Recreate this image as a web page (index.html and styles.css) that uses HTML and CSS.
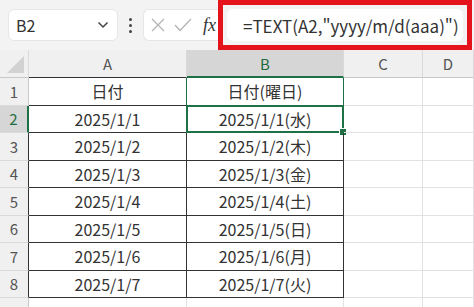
FILE: index.html
```html
<!DOCTYPE html>
<html lang="ja">
<head>
    <meta charset="UTF-8">
    <title>TEXT関数</title>
    <link rel="stylesheet" href="styles.css">
</head>
<body>
    <div class="toolbar">
        <div class="namebox">
            <span>B2</span>
            <svg width="12" height="8" viewBox="0 0 12 8"><path d="M1.5 1.5 L6 6 L10.5 1.5" fill="none" stroke="#444" stroke-width="1.5"/></svg>
        </div>
        <div class="dots"><i></i><i></i><i></i></div>
        <div class="fxbox">
            <svg width="14" height="14" viewBox="0 0 14 14"><path d="M1 1 L13 13 M13 1 L1 13" stroke="#b4b4b4" stroke-width="1.3"/></svg>
            <svg width="18" height="14" viewBox="0 0 18 14"><path d="M1 7 L6 12.5 L17 1" fill="none" stroke="#b4b4b4" stroke-width="1.3"/></svg>
            <span class="fx">fx</span>
        </div>
        <div class="formula">
            <div class="input">=TEXT(A2,"yyyy/m/d(aaa)")</div>
        </div>
    </div>

    <div class="sheet">
        <div class="ch corner"><span class="tri"></span></div>
        <div class="ch dark">A</div>
        <div class="ch sel">B</div>
        <div class="ch">C</div>
        <div class="ch">D</div>

        <div class="rh">1</div>
        <div class="c t">日付</div>
        <div class="c t g1">日付(曜日)</div>
        <div class="c"></div>
        <div class="c"></div>

        <div class="rh sel">2</div>
        <div class="c t">2025/1/1</div>
        <div class="c t g2">2025/1/1(水)<span class="handle"></span></div>
        <div class="c"></div>
        <div class="c"></div>

        <div class="rh dark">3</div>
        <div class="c t">2025/1/2</div>
        <div class="c t">2025/1/2(木)</div>
        <div class="c"></div>
        <div class="c"></div>

        <div class="rh dark">4</div>
        <div class="c t">2025/1/3</div>
        <div class="c t">2025/1/3(金)</div>
        <div class="c"></div>
        <div class="c"></div>

        <div class="rh dark">5</div>
        <div class="c t">2025/1/4</div>
        <div class="c t">2025/1/4(土)</div>
        <div class="c"></div>
        <div class="c"></div>

        <div class="rh dark">6</div>
        <div class="c t">2025/1/5</div>
        <div class="c t">2025/1/5(日)</div>
        <div class="c"></div>
        <div class="c"></div>

        <div class="rh dark">7</div>
        <div class="c t">2025/1/6</div>
        <div class="c t">2025/1/6(月)</div>
        <div class="c"></div>
        <div class="c"></div>

        <div class="rh dark">8</div>
        <div class="c t">2025/1/7</div>
        <div class="c t">2025/1/7(火)</div>
        <div class="c"></div>
        <div class="c"></div>

        <div class="rh"></div>
        <div class="c"></div>
        <div class="c"></div>
        <div class="c"></div>
        <div class="c"></div>
    </div>
</body>
</html>
```

FILE: styles.css
```css
body {
    margin: 0;
    width: 474px;
    height: 307px;
    overflow: hidden;
    background-color: #fff;
    font-family: "Noto Sans CJK JP", "Noto Sans", sans-serif;
    color: #333;
}

.toolbar {
    display: flex;
    align-items: center;
    height: 50px;
    background-color: #f3f3f3;
}

.namebox {
    margin-left: 8px;
    width: 110px;
    height: 32px;
    box-sizing: border-box;
    padding: 0 8px 0 7px;
    background-color: #fff;
    border: 1px solid #e6e6e6;
    border-radius: 6px;
    display: flex;
    align-items: center;
    justify-content: space-between;
    font-size: 16px;
}

.dots {
    width: 25px;
    display: flex;
    flex-direction: column;
    align-items: center;
    gap: 3px;
}

.dots i {
    width: 3px;
    height: 3px;
    border-radius: 50%;
    background-color: #444;
}

.fxbox {
    width: 75px;
    height: 32px;
    box-sizing: border-box;
    padding-left: 7px;
    background-color: #fff;
    border: 1px solid #e6e6e6;
    border-right: none;
    border-radius: 6px 0 0 6px;
    display: flex;
    align-items: center;
    gap: 9px;
}

.fx {
    font-family: "Liberation Serif", serif;
    font-style: italic;
    font-size: 18px;
    color: #333;
    margin-left: 2px;
}

.formula {
    width: 254px;
    height: 50px;
    box-sizing: border-box;
    border: 5px solid #e5131b;
    padding: 4px 4px;
    align-self: flex-start;
}

.input {
    height: 100%;
    box-sizing: border-box;
    padding-left: 16px;
    background-color: #fff;
    border-radius: 6px;
    display: flex;
    align-items: center;
    font-size: 17px;
    color: #333;
}

.sheet {
    display: grid;
    grid-template-columns: 29px 158px 157px 79px 51px;
    grid-template-rows: 28px repeat(9, 27.5px);
}

.ch, .rh {
    background-color: #f0f0f0;
    color: #555;
    font-size: 15px;
    display: flex;
    align-items: center;
    justify-content: center;
    box-sizing: border-box;
}

.ch {
    border-right: 1px solid #dadada;
    border-bottom: 1px solid #c8c8c8;
}

.rh {
    border-right: 1px solid #c8c8c8;
    border-bottom: 1px solid #dadada;
}

.ch.dark {
    border-bottom-color: #333;
}

.rh.dark {
    border-right-color: #333;
}

.ch.sel {
    background-color: #d6d6d6;
    color: #1e6c41;
    border-bottom: 2px solid #1e7145;
}

.rh.sel {
    background-color: #d6d6d6;
    color: #1e6c41;
    border-right: 2px solid #1e7145;
}

.corner {
    position: relative;
}

.tri {
    position: absolute;
    right: 4px;
    bottom: 4px;
    width: 0;
    height: 0;
    border-left: 17px solid transparent;
    border-bottom: 17px solid #d2d2d2;
}

.c {
    box-sizing: border-box;
    border-right: 1px solid #e2e2e2;
    border-bottom: 1px solid #e2e2e2;
    display: flex;
    align-items: center;
    justify-content: center;
    font-size: 16px;
    position: relative;
}

.c.t {
    border-right-color: #333;
    border-bottom-color: #333;
}

.c.g1 {
    border-left: 1px solid #1e7145;
    border-right: 1px solid #1e7145;
    margin-left: -1px;
}

.c.g2 {
    border: 2px solid #1e7145;
    margin-left: -1px;
    margin-top: -1px;
}

.handle {
    position: absolute;
    right: -5px;
    bottom: -5px;
    width: 6px;
    height: 6px;
    background-color: #1e7145;
    border: 1px solid #fff;
}
```
